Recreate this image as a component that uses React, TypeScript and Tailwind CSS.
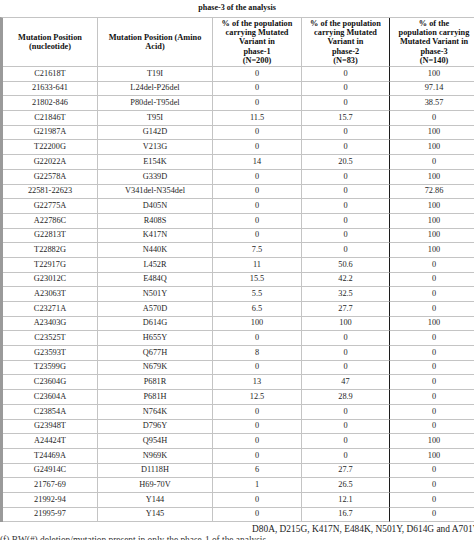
import React from "react";

const rows: string[][] = [
  ["C21618T", "T19I", "0", "0", "100"],
  ["21633-641", "L24del-P26del", "0", "0", "97.14"],
  ["21802-846", "P80del-T95del", "0", "0", "38.57"],
  ["C21846T", "T95I", "11.5", "15.7", "0"],
  ["G21987A", "G142D", "0", "0", "100"],
  ["T22200G", "V213G", "0", "0", "100"],
  ["G22022A", "E154K", "14", "20.5", "0"],
  ["G22578A", "G339D", "0", "0", "100"],
  ["22581-22623", "V341del-N354del", "0", "0", "72.86"],
  ["G22775A", "D405N", "0", "0", "100"],
  ["A22786C", "R408S", "0", "0", "100"],
  ["G22813T", "K417N", "0", "0", "100"],
  ["T22882G", "N440K", "7.5", "0", "100"],
  ["T22917G", "L452R", "11", "50.6", "0"],
  ["G23012C", "E484Q", "15.5", "42.2", "0"],
  ["A23063T", "N501Y", "5.5", "32.5", "0"],
  ["C23271A", "A570D", "6.5", "27.7", "0"],
  ["A23403G", "D614G", "100", "100", "100"],
  ["C23525T", "H655Y", "0", "0", "0"],
  ["G23593T", "Q677H", "8", "0", "0"],
  ["T23599G", "N679K", "0", "0", "0"],
  ["C23604G", "P681R", "13", "47", "0"],
  ["C23604A", "P681H", "12.5", "28.9", "0"],
  ["C23854A", "N764K", "0", "0", "0"],
  ["G23948T", "D796Y", "0", "0", "0"],
  ["A24424T", "Q954H", "0", "0", "100"],
  ["T24469A", "N969K", "0", "0", "100"],
  ["G24914C", "D1118H", "6", "27.7", "0"],
  ["21767-69", "H69-70V", "1", "26.5", "0"],
  ["21992-94", "Y144", "0", "12.1", "0"],
  ["21995-97", "Y145", "0", "16.7", "0"],
];

const headers: string[][] = [
  ["Mutation Position", "(nucleotide)"],
  ["Mutation Position (Amino", "Acid)"],
  ["% of the population", "carrying Mutated", "Variant in", "phase-1", "(N=200)"],
  ["% of the population", "carrying Mutated", "Variant in", "phase-2", "(N=83)"],
  ["% of the", "population carrying", "Mutated Variant in", "phase-3", "(N=140)"],
];

// column 4 carries the dark rule that splits off phase-3
const cellBorder = (i: number) =>
  i === 3
    ? "border-b border-b-[#c4c4c4] border-r-[1.5px] border-r-[#1c1c1c]"
    : "border-b border-r border-[#c4c4c4]";

const App = () => {
  return (
    <div className="w-[474px] h-[540px] overflow-hidden bg-white font-['Liberation_Serif',serif] text-[#1e1e1e]">
      <div className="text-center font-bold text-[8.1px] leading-[10px] text-[#111] whitespace-nowrap">
        <p className="-mt-[9px]">
          Frequency of mutations in the spike protein of the population during phase-1, phase-2 and
        </p>
        <p className="mt-[2px]">phase-3 of the analysis</p>
      </div>

      <div className="mt-[4px] w-[476px] grid grid-cols-[95px_115px_89px_88px_89px] border-t border-t-[#c4c4c4] border-l-[3px] border-l-[#9a9a9a]">
        {headers.map((lines, i) => (
          <div
            key={i}
            className={`h-[49px] flex flex-col items-center justify-center text-center font-bold text-[8.3px] leading-[9.3px] text-[#111] ${cellBorder(i)}`}
          >
            {lines.map((l) => (
              <span key={l} className="whitespace-nowrap">
                {l}
              </span>
            ))}
          </div>
        ))}
        {rows.map((r, ri) =>
          r.map((c, i) => (
            <div
              key={`${ri}-${i}`}
              className={`h-[14.7px] flex items-center justify-center text-[8.3px] leading-none whitespace-nowrap ${cellBorder(i)}`}
            >
              {c}
            </div>
          ))
        )}
      </div>

      <div className="mt-[2px] pl-[252px] text-[9.4px] leading-[11px] whitespace-nowrap text-[#1a1a1a]">
        D80A, D215G, K417N, E484K, N501Y, D614G and A701V
      </div>
      <div className="text-[9.4px] leading-[11px] whitespace-nowrap text-[#333]">
        (f) BW(#) deletion/mutation present in only the phase-1 of the analysis
      </div>
    </div>
  );
};

export default App;
